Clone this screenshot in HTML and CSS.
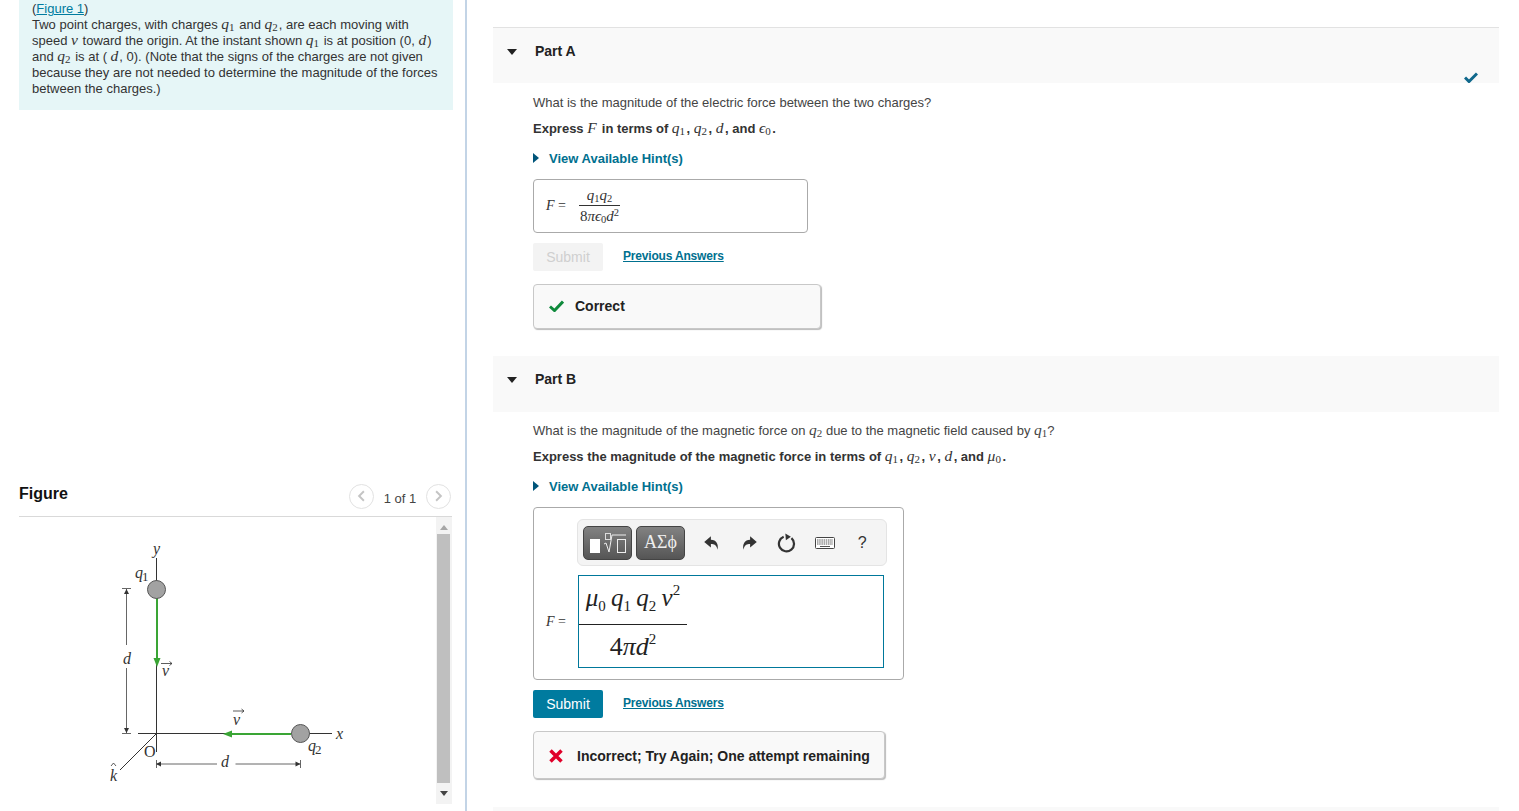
FILE: index.html
```html
<!DOCTYPE html>
<html lang="en">
<head>
<meta charset="utf-8">
<title>Part B</title>
<link rel="stylesheet" href="styles.css">
</head>
<body>
<div class="page">
  <aside class="left">
    <div class="intro">
      <p>(<a class="fig-link" href="#">Figure 1</a>)</p>
      <p>Two point charges, with charges <span class="m"><i>q</i><sub>1</sub></span> and <span class="m"><i>q</i><sub>2</sub></span>, are each moving with speed <span class="m"><i>v</i></span> toward the origin. At the instant shown <span class="m"><i>q</i><sub>1</sub></span> is at position (0, <span class="m"><i>d</i></span>) and <span class="m"><i>q</i><sub>2</sub></span> is at ( <span class="m"><i>d</i></span>, 0). (Note that the signs of the charges are not given because they are not needed to determine the magnitude of the forces between the charges.)</p>
    </div>
    <div class="fig-head">
      <h2>Figure</h2>
      <div class="pager">
        <span class="pg-btn"><svg width="24" height="24" viewBox="0 0 24 24"><path d="M14.500 7L9.500 12L14.500 17" fill="none" stroke="#c4c4c4" stroke-width="2"/></svg></span>
        <span class="pg-text">1 of 1</span>
        <span class="pg-btn"><svg width="24" height="24" viewBox="0 0 24 24"><path d="M9.500 7L14.500 12L9.500 17" fill="none" stroke="#c4c4c4" stroke-width="2"/></svg></span>
      </div>
    </div>
    <div class="fig-body">
      <svg class="diagram" width="417" height="287" viewBox="19 517 417 287">
        <g stroke="#333" stroke-width="1" fill="none">
          <path d="M156.500 558V752M138 733.500H332M156.500 733.500L120 770"/>
        </g>
        <g stroke="#666" stroke-width="1" fill="none">
          <path d="M126.500 589V645M126.500 668V733M122 588.500H131M122 733.500H131M156 764H217M235.500 764H300M156.500 760V768M300.500 760V768"/>
        </g>
        <g fill="#333">
          <path d="M126.500 589l-2.500 5h5zM126.500 733l-2.500-5h5zM156 764l5-2.500v5zM300.500 764l-5-2.500v5z"/>
        </g>
        <g stroke="#3aa535" stroke-width="2" fill="#3aa535">
          <path d="M157 598V662" fill="none"/>
          <path d="M228 734H291" fill="none"/>
          <path d="M157 667l-3.500-9h7z" stroke="none"/>
          <path d="M223 734l9-3.500v7z" stroke="none"/>
        </g>
        <circle cx="156.500" cy="589.500" r="9" fill="#a2a2a2" stroke="#555"/>
        <circle cx="300.500" cy="733.500" r="9" fill="#a2a2a2" stroke="#555"/>
        <g stroke="#333" stroke-width="0.800" fill="none">
          <path d="M161 663.500H172M169.500 661.500L172 663.500L169.500 665.500M233 711H244M241.500 709L244 711L241.500 713"/>
          <path d="M111 766L113.500 763L116 766"/>
        </g>
        <g class="dg">
          <text x="153" y="554">y</text>
          <text x="135" y="578">q</text><text class="dg-s" x="142" y="581">1</text>
          <text x="123" y="664">d</text>
          <text x="162" y="676">v</text>
          <text x="233" y="725">v</text>
          <text x="336" y="739">x</text>
          <text x="308" y="751">q</text><text class="dg-s" x="315" y="754">2</text>
          <text class="dg-r" x="144" y="757">O</text>
          <text x="221" y="767">d</text>
          <text x="110" y="781">k</text>
        </g>
      </svg>
      <div class="scrollbar">
        <span class="sb-up"></span>
        <span class="sb-thumb"></span>
        <span class="sb-down"></span>
      </div>
    </div>
  </aside>

  <main class="right">
    <section class="part part-a">
      <header class="part-head">
        <span class="caret"></span><h3>Part A</h3>
        <svg class="done" width="14" height="11" viewBox="0 0 14 11"><path d="M1 5.500L5 9.500L13 1.500" fill="none" stroke="#10688c" stroke-width="3"/></svg>
      </header>
      <div class="part-body">
        <p class="q">What is the magnitude of the electric force between the two charges?</p>
        <p class="ex">Express <span class="m"><i>F</i></span> in terms of <span class="m"><i>q</i><sub>1</sub></span>, <span class="m"><i>q</i><sub>2</sub></span>, <span class="m"><i>d</i></span>, and <span class="m"><i>ϵ</i><sub>0</sub></span>.</p>
        <div class="hint"><span class="hint-caret"></span><a href="#">View Available Hint(s)</a></div>
        <div class="ans-a">
          <span class="m lhs"><i>F</i> =</span>
          <span class="frac">
            <span class="num m"><i>q</i><sub>1</sub><i>q</i><sub>2</sub></span>
            <span class="den m">8<i>πϵ</i><sub>0</sub><i>d</i><sup>2</sup></span>
          </span>
        </div>
        <div class="actions">
          <button class="submit off" type="button">Submit</button>
          <a class="prev" href="#">Previous Answers</a>
        </div>
        <div class="fb fb-ok">
          <svg width="15" height="12" viewBox="0 0 15 12"><path d="M1 6.500L5.500 10.500L14 1.500" fill="none" stroke="#0f8a3c" stroke-width="3"/></svg>
          <span>Correct</span>
        </div>
      </div>
    </section>

    <section class="part part-b">
      <header class="part-head">
        <span class="caret"></span><h3>Part B</h3>
      </header>
      <div class="part-body">
        <p class="q">What is the magnitude of the magnetic force on <span class="m"><i>q</i><sub>2</sub></span> due to the magnetic field caused by <span class="m"><i>q</i><sub>1</sub></span>?</p>
        <p class="ex">Express the magnitude of the magnetic force in terms of <span class="m"><i>q</i><sub>1</sub></span>, <span class="m"><i>q</i><sub>2</sub></span>, <span class="m"><i>v</i></span>, <span class="m"><i>d</i></span>, and <span class="m"><i>μ</i><sub>0</sub></span>.</p>
        <div class="hint"><span class="hint-caret"></span><a href="#">View Available Hint(s)</a></div>
        <div class="ans-b">
          <div class="toolbar">
            <span class="tb-btn tb-tpl">
              <svg width="40" height="26" viewBox="0 0 40 26"><rect x="3" y="9" width="10" height="14" fill="#fff"/><rect x="18.500" y="3.500" width="5" height="6" fill="none" stroke="#ddd"/><path d="M17 14l2-1 3 9 3-17H39" fill="none" stroke="#eee" stroke-width="1"/><rect x="30.500" y="9.500" width="8" height="13" fill="none" stroke="#eee"/></svg>
            </span>
            <span class="tb-btn tb-sym">ΑΣϕ</span>
            <span class="tb-icon"><svg width="20" height="20" viewBox="0 0 18 18"><path d="M8 3L2 8l6 5v-3c3 0 5 1 6 5 1-5-1-9-6-9z" fill="#333"/></svg></span>
            <span class="tb-icon"><svg width="20" height="20" viewBox="0 0 18 18"><path d="M10 3l6 5-6 5v-3c-3 0-5 1-6 5-1-5 1-9 6-9z" fill="#333"/></svg></span>
            <span class="tb-icon"><svg width="20" height="20" viewBox="0 0 18 18"><path d="M13 4.600A6.800 6.800 0 1 1 6 3.400" fill="none" stroke="#333" stroke-width="2"/><path d="M7.500 0.500L12.500 3.300L8 6.500z" fill="#333"/></svg></span>
            <span class="tb-icon"><svg width="20" height="12" viewBox="0 0 20 12"><rect x="0.500" y="0.500" width="19" height="11" rx="1" fill="#fff" stroke="#444"/><path d="M2 3h16M2 5h16M2 7h16" stroke="#555" stroke-dasharray="1.500 .7"/><path d="M5 9.500h10" stroke="#555"/></svg></span>
            <span class="tb-icon tb-q">?</span>
          </div>
          <div class="eq-row">
            <span class="m lhs"><i>F</i> =</span>
            <div class="eq-input">
              <div class="eq-frac">
                <div class="eq-num"><i>μ</i><sub>0</sub> <i>q</i><sub>1</sub> <i>q</i><sub>2</sub> <i>v</i><sup>2</sup></div>
                <div class="eq-den">4<i>πd</i><sup>2</sup></div>
              </div>
            </div>
          </div>
        </div>
        <div class="actions">
          <button class="submit" type="button">Submit</button>
          <a class="prev" href="#">Previous Answers</a>
        </div>
        <div class="fb fb-bad">
          <svg width="14" height="14" viewBox="0 0 14 14"><path d="M1.500 1.500L12.500 12.500M12.500 1.500L1.500 12.500" fill="none" stroke="#e0002a" stroke-width="3.500"/></svg>
          <span>Incorrect; Try Again; One attempt remaining</span>
        </div>
      </div>
    </section>
    <div class="next-part"></div>
  </main>
</div>
</body>
</html>
```
FILE: styles.css
```css
* { box-sizing: border-box; }
html, body { margin: 0; padding: 0; height: 811px; overflow: hidden; background: #fff; }
body { font-family: "Liberation Sans", Arial, sans-serif; font-size: 13px; color: #333; }
p, h2, h3 { margin: 0; }
a { color: #007b9f; }

.page { display: flex; height: 811px; }

.left { width: 467px; flex: none; padding-left: 19px; padding-right: 13px; border-right: 2px solid #c3d4e6; }
.intro { background: #e6f6f7; height: 110px; padding: 1px 13px 0; font-size: 13px; line-height: 16px; width: 434px; }
.intro .m { margin-right: 1px; }
.fig-link { color: #007b9f; }
.m { font-family: "Liberation Serif", serif; font-size: 15.500px; line-height: 0; font-weight: normal; white-space: nowrap; }
.m sub { font-size: 11px; font-style: normal; line-height: 0; vertical-align: -2px; }
.m sup { font-size: 11px; line-height: 0; vertical-align: 5px; }

.fig-head { display: flex; justify-content: space-between; align-items: center; width: 433px; height: 40px; margin-top: 367px; border-bottom: 1px solid #d9d9d9; }
.fig-head h2 { font-size: 16px; font-weight: bold; color: #111; margin-top: -6px; }
.pager { display: flex; align-items: center; margin-top: -1px; margin-right: 1px; }
.pg-btn { display: flex; width: 25px; height: 25px; align-items: center; justify-content: center; border: 1px solid #e2e2e2; border-radius: 50%; }
.pg-text { width: 52px; padding-top: 5px; text-align: center; font-size: 13px; color: #444; }

.fig-body { display: flex; width: 433px; height: 287px; }
.diagram { flex: none; display: block; }
.dg text { font-family: "Liberation Serif", serif; font-style: italic; font-size: 16px; fill: #333; }
.dg .dg-s { font-size: 13px; font-style: normal; }
.dg .dg-r { font-style: normal; }
.scrollbar { flex: none; width: 16px; background: #f3f3f3; display: flex; flex-direction: column; align-items: center; }
.sb-up { width: 0; height: 0; margin: 8px 0 4px; border: 4px solid transparent; border-top: 0; border-bottom: 5px solid #a6a6a6; }
.sb-thumb { width: 13px; height: 249px; margin-right: 1px; background: #bfbfbf; }
.sb-down { width: 0; height: 0; margin-top: 8px; border: 4px solid transparent; border-bottom: 0; border-top: 5px solid #444; }

.right { flex: 1; padding: 27px 20px 0 26px; }
.part-a { border-top: 1px solid #e2e2e2; }
.part-head { position: relative; display: flex; height: 56px; background: #f9f9f9; padding: 15px 0 0 14px; }
.part-a .part-head { height: 55px; }
.part-head h3 { font-size: 14px; font-weight: bold; color: #222; line-height: 17px; margin-left: 18px; }
.caret { width: 0; height: 0; margin-top: 6px; border: 5.500px solid transparent; border-bottom: 0; border-top: 6px solid #222; }
.done { position: absolute; right: 21px; bottom: 0; }
.part-body { padding-left: 40px; }
.q { color: #444; line-height: 18px; padding-top: 11px; }
.part-b .q { padding-top: 10px; }
.ex { color: #333; font-weight: bold; line-height: 18px; margin-top: 8px; }
.ex .m { margin-right: 1.500px; }
.hint { display: flex; align-items: center; height: 18px; margin-top: 11px; }
.hint a { font-weight: bold; font-size: 13px; color: #00708f; text-decoration: none; }
.hint-caret { width: 0; height: 0; margin-right: 10px; border: 5px solid transparent; border-right: 0; border-left: 6px solid #00557a; }

.ans-a { display: flex; align-items: center; width: 275px; height: 54px; margin-top: 12px; padding-left: 12px; border: 1px solid #aaa; border-radius: 4px; }
.lhs { font-size: 14px; white-space: nowrap; margin-right: 13px; line-height: 16px; }
.frac { display: inline-flex; flex-direction: column; align-items: center; }
.frac .m { font-size: 15px; }
.frac sub, .frac sup { font-size: 10.500px; }
.num { padding-bottom: 2px; border-bottom: 1px solid #333; width: 41px; text-align: center; line-height: 16px; }
.den { line-height: 20px; white-space: nowrap; }

.actions { display: flex; align-items: flex-start; margin-top: 10px; }
.submit { width: 70px; height: 28px; border: 0; border-radius: 2px; background: #007b9f; color: #fff; font: 14px "Liberation Sans", Arial, sans-serif; padding: 0; }
.submit.off { background: #f3f3f3; color: #cfcfcf; }
.prev { margin: 5px 0 0 20px; font-size: 12px; line-height: 16px; font-weight: bold; color: #00708f; letter-spacing: -0.180px; }

.fb { display: flex; align-items: center; margin-top: 13px; padding-left: 15px; background: #f9f9f9; border: 1px solid #c8c8c8; border-radius: 4px; box-shadow: 1px 1px 1px #bbb; font-size: 14px; font-weight: bold; color: #222; }
.fb-ok { width: 288px; height: 45px; padding-bottom: 2px; }
.fb-ok span { margin-left: 11px; }
.fb-bad { width: 352px; height: 48px; padding-top: 2px; }
.fb-bad span { margin-left: 14px; }
.part-b { margin-top: 27px; }

.ans-b { width: 371px; height: 173px; margin-top: 12px; padding: 11px 16px 0 43px; border: 1px solid #aaa; border-radius: 4px; }
.toolbar { display: flex; align-items: center; width: 310px; height: 47px; padding: 0 5px; background: #f4f4f4; border: 1px solid #e4e4e4; border-radius: 6px; }
.tb-btn { display: flex; align-items: center; justify-content: center; height: 34px; width: 50px; border: 1px solid #444; border-radius: 5px; background: linear-gradient(#828282, #555); color: #eee; }
.tb-sym { margin-left: 4px; font-family: "Liberation Serif", serif; font-size: 18px; }
.tb-icon { display: flex; align-items: center; justify-content: center; width: 38.500px; color: #333; }
.tb-icon:nth-child(3) { margin-left: 8px; }
.tb-q { font-size: 16px; }
.eq-row { display: flex; align-items: center; height: 93px; margin: 9px 0 0 -31px; }
.eq-row .lhs { margin-right: 9px; width: 23px; }
.eq-input { width: 306px; height: 93px; border: 1px solid #00789b; flex: none; }
.eq-frac { width: 108px; font-family: "Liberation Serif", serif; font-size: 25px; color: #222; text-align: center; }
.eq-frac sub, .eq-frac sup { font-size: 15px; line-height: 0; }
.eq-frac sub { vertical-align: -5px; }
.eq-frac sup { vertical-align: 11px; }
.eq-num { height: 49px; padding-top: 4px; line-height: 36px; border-bottom: 1px solid #222; white-space: nowrap; word-spacing: -1px; }
.eq-den { line-height: 43px; font-size: 26px; }

.next-part { height: 30px; margin-top: 28px; background: #f9f9f9; }
```
